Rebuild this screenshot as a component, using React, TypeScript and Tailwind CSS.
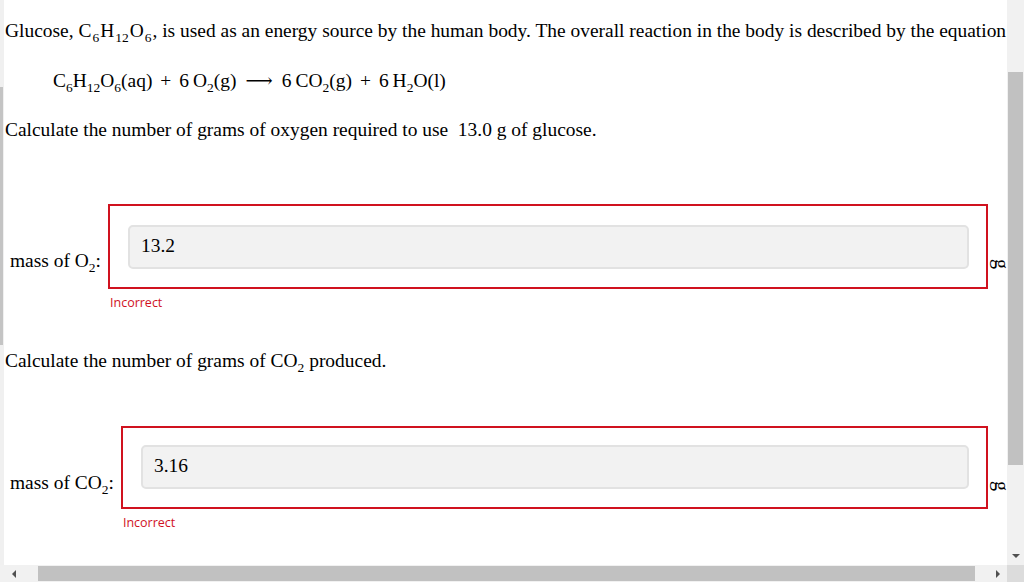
import React from "react";

const serif = "font-['Liberation_Serif','Times_New_Roman',serif]";

function Sub({ children, wide }: { children: React.ReactNode; wide?: boolean }) {
  return (
    <sub className={`bottom-[-5px] text-[13.5px] ${wide ? "mx-[1px]" : ""}`}>{children}</sub>
  );
}

function Answer({
  label,
  value,
  boxPad,
}: {
  label: React.ReactNode;
  value: string;
  boxPad: string;
}) {
  return (
    <div className="flex items-start">
      {/* label sits a bit below the box centre, like the original */}
      <div className="mt-[45px] shrink-0 pl-[5px] pr-[7px] text-[19.45px] leading-[24px] text-black">
        {label}
      </div>
      <div className="flex min-w-0 flex-1 flex-col">
        <div className={`border-2 border-[#d0121f] ${boxPad}`}>
          <div className="h-[44px] rounded-[5px] border-2 border-[#e2e2e2] bg-[#f2f2f2] pl-[11px] pt-[7px] text-[19.45px] leading-[24px] text-black">
            {value}
          </div>
        </div>
        <div className="mt-[6px] pl-[2px] font-['Open_Sans',sans-serif] text-[12.5px] leading-[16px] text-[#d0121f]">
          Incorrect
        </div>
      </div>
      <div className="flex w-[19px] shrink-0 justify-center pt-[48px]">
        <span className="inline-block translate-x-[4px] rotate-90 text-[20px] leading-[24px]">g</span>
      </div>
    </div>
  );
}

export default function App() {
  return (
    <div className={`flex h-[582px] w-[1024px] flex-col overflow-hidden bg-white ${serif}`}>
      <div className="flex min-h-0 flex-1">
        {/* sliver of the outer frame's scrollbar */}
        <div className="flex w-[4px] shrink-0 flex-col bg-[#f0f0f0]">
          <div className="h-[87px]" />
          <div className="h-[258px] w-[3px] bg-[#c4c4c4]" />
        </div>

        <main className="min-w-0 flex-1 pl-[1px] pt-[19px] text-black">
          <p className="whitespace-nowrap text-[19.45px] leading-[24px]">
            Glucose, C<Sub wide>6</Sub>H<Sub wide>12</Sub>O<Sub wide>6</Sub>, is used as an energy source by the human body. The overall reaction in the body is described by the equation
          </p>

          <p className="mt-[25px] flex items-baseline whitespace-nowrap pl-[48px] text-[19.45px] leading-[24px]">
            <span>
              C<Sub>6</Sub>H<Sub>12</Sub>O<Sub>6</Sub>(aq)
            </span>
            <span className="mx-[8px]">+</span>
            <span>6</span>
            <span className="ml-[4px]">
              O<Sub>2</Sub>(g)
            </span>
            <span className="mx-[9px] font-['DejaVu_Serif',serif] text-[19px]">⟶</span>
            <span>6</span>
            <span className="ml-[4px]">
              CO<Sub>2</Sub>(g)
            </span>
            <span className="mx-[8px]">+</span>
            <span>6</span>
            <span className="ml-[4px]">
              H<Sub>2</Sub>O(l)
            </span>
          </p>

          <p className="mt-[25px] text-[19.45px] leading-[24px]">
            Calculate the number of grams of oxygen required to use &nbsp;13.0 g of glucose.
          </p>

          <div className="mt-[62px]">
            <Answer
              label={
                <>
                  mass of O<Sub>2</Sub>:
                </>
              }
              value="13.2"
              boxPad="pl-[18px] pr-[17px] pt-[19px] pb-[18px]"
            />
          </div>

          <p className="mt-[38px] text-[19.45px] leading-[24px]">
            Calculate the number of grams of CO<Sub>2</Sub> produced.
          </p>

          <div className="mt-[53px]">
            <Answer
              label={
                <>
                  mass of CO<Sub>2</Sub>:
                </>
              }
              value="3.16"
              boxPad="pl-[18px] pr-[17px] pt-[17px] pb-[18px]"
            />
          </div>
        </main>

        {/* vertical scrollbar */}
        <div className="flex w-[17px] shrink-0 flex-col items-center bg-[#f1f1f1]">
          <div className="mt-[-4px] h-0 w-0 border-x-[4px] border-b-[4px] border-x-transparent border-b-[#a3a3a3]" />
          <div className="mt-[72px] h-[393px] w-[15px] bg-[#c1c1c1]" />
          <div className="flex-1" />
          <div className="mb-[7px] h-0 w-0 border-x-[4px] border-t-[4px] border-x-transparent border-t-[#505050]" />
        </div>
      </div>

      {/* horizontal scrollbar */}
      <div className="flex h-[17px] shrink-0 items-center bg-[#f1f1f1]">
        <div className="flex w-[38px] shrink-0 justify-center pr-[10px]">
          <div className="h-0 w-0 border-y-[4px] border-r-[4px] border-y-transparent border-r-[#505050]" />
        </div>
        <div className="h-[15px] w-[937px] bg-[#c1c1c1]" />
        <div className="flex flex-1 justify-center pl-[14px]">
          <div className="h-0 w-0 border-y-[4px] border-l-[4px] border-y-transparent border-l-[#505050]" />
        </div>
        <div className="h-[17px] w-[17px] shrink-0 bg-[#dcdcdc]" />
      </div>
    </div>
  );
}
